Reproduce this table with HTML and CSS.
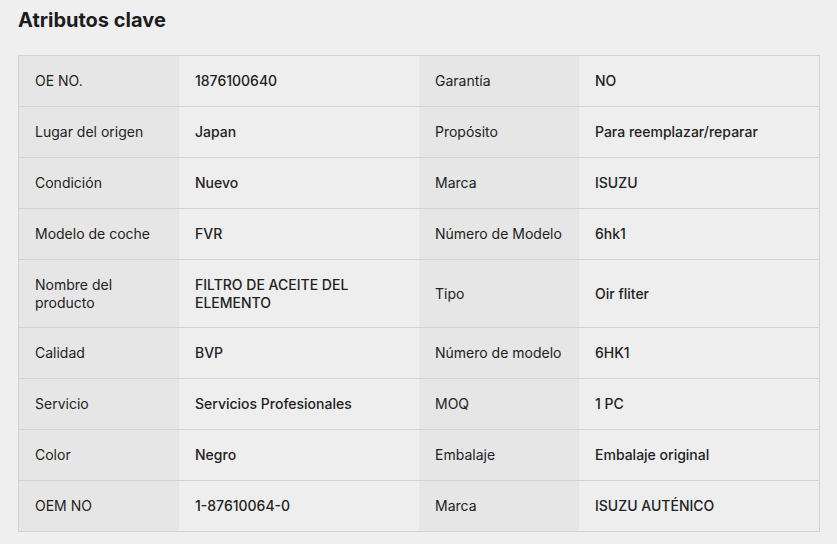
FILE: index.html
```html
<!DOCTYPE html>
<html lang="es">
<head>
<meta charset="utf-8">
<link rel="stylesheet" href="styles.css">
</head>
<body>
<section class="attrs">
  <h2 class="attrs-title">Atributos clave</h2>
  <table class="attrs-table">
    <tr><td class="k">OE NO.</td><td class="v">1876100640</td><td class="k">Garantía</td><td class="v">NO</td></tr>
    <tr><td class="k">Lugar del origen</td><td class="v">Japan</td><td class="k">Propósito</td><td class="v">Para reemplazar/reparar</td></tr>
    <tr><td class="k">Condición</td><td class="v">Nuevo</td><td class="k">Marca</td><td class="v">ISUZU</td></tr>
    <tr><td class="k">Modelo de coche</td><td class="v">FVR</td><td class="k">Número de Modelo</td><td class="v">6hk1</td></tr>
    <tr><td class="k">Nombre del producto</td><td class="v">FILTRO DE ACEITE DEL ELEMENTO</td><td class="k">Tipo</td><td class="v">Oir fliter</td></tr>
    <tr><td class="k">Calidad</td><td class="v">BVP</td><td class="k">Número de modelo</td><td class="v">6HK1</td></tr>
    <tr><td class="k">Servicio</td><td class="v">Servicios Profesionales</td><td class="k">MOQ</td><td class="v">1 PC</td></tr>
    <tr><td class="k">Color</td><td class="v">Negro</td><td class="k">Embalaje</td><td class="v">Embalaje original</td></tr>
    <tr><td class="k">OEM NO</td><td class="v">1-87610064-0</td><td class="k">Marca</td><td class="v">ISUZU AUTÉNICO</td></tr>
  </table>
</section>
</body>
</html>
```

FILE: styles.css
```css
html, body {
  margin: 0;
  padding: 0;
  background: #efefef;
}
body {
  font-family: Inter, "Noto Sans", sans-serif;
  color: #222222;
}
.attrs {
  padding: 7px 18px 0 18px;
}
.attrs-title {
  margin: 0 0 21px 0;
  font-size: 20px;
  line-height: 27px;
  font-weight: 700;
  color: #1c1c1c;
}
.attrs-table {
  width: 802px;
  border-collapse: collapse;
  table-layout: fixed;
  border: 1px solid #d3d3d3;
}
.attrs-table td {
  border-top: 1px solid #d3d3d3;
  border-bottom: 1px solid #d3d3d3;
  padding: 16px 16px;
  font-size: 14px;
  line-height: 17.5px;
  height: 18px;
  vertical-align: middle;
}
.attrs-table td.k {
  width: 128px;
  background: #e6e6e6;
  font-weight: 400;
}
.attrs-table td.v {
  width: 208px;
  background: #eeeeee;
  font-weight: 500;
}
```
